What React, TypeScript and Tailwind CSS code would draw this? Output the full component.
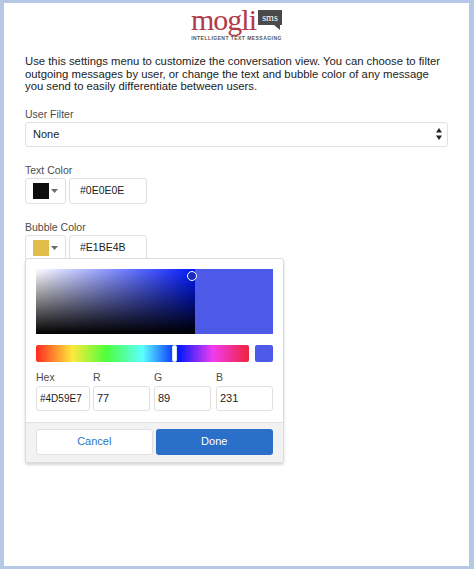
const Swatch = ({ gold }: { gold?: boolean }) => (
  <div className="flex h-[26px] w-[41px] items-center rounded-[3px] border border-[#e2e0de] bg-white pl-[7px]">
    <div className={gold ? 'h-[16px] w-[16px] bg-[#e1be4b]' : 'h-[16px] w-[16px] bg-[#0e0e0e]'} />
    <svg width="7" height="4" viewBox="0 0 7 4" className="ml-[2px]">
      <path d="M0 0h7L3.5 4z" fill="#6b6b6b" />
    </svg>
  </div>
);

const ColorField = ({ label, hex, gold }: { label: string; hex: string; gold?: boolean }) => (
  <div>
    <div className="mb-[1px] text-[10.5px] leading-[14px] text-[#4c4c4c]">{label}</div>
    <div className="flex gap-[3px]">
      <Swatch gold={gold} />
      <div className="flex h-[26px] w-[78px] items-center rounded-[3px] border border-[#e2e0de] bg-white pl-[10px] text-[10.5px] text-[#222]">
        {hex}
      </div>
    </div>
  </div>
);

const RgbField = ({ label, value, className, small }: { label: string; value: string; className: string; small?: boolean }) => (
  <div className={className}>
    <div className="mb-[2px] text-[10.5px] leading-[13px] text-[#4c4c4c]">{label}</div>
    <div className={small ? 'flex h-[25px] items-center rounded-[3px] border border-[#e2e0de] bg-white pl-[3px] text-[10px] text-[#222]' : 'flex h-[25px] items-center rounded-[3px] border border-[#e2e0de] bg-white pl-[3px] text-[11px] text-[#222]'}>
      {value}
    </div>
  </div>
);

export default function App() {
  return (
    <div className="flex h-[569px] w-[474px] flex-col overflow-hidden bg-[#b5c9e6] pb-[3px] pl-[4px] pr-[5px] pt-[3px] font-['Liberation_Sans',Arial,sans-serif]">
      <div className="flex-1 bg-white px-[21px] text-[#222]">
        {/* logo */}
        <div className="flex flex-col items-center pt-[3px]">
          <div className="flex h-[28px] items-start gap-[2px]">
            <span className="font-['Liberation_Serif',serif] text-[30px] leading-[28px] tracking-[-1px] text-[#b23a48]">mogli</span>
            <div className="relative mt-[4px] flex h-[15px] w-[24px] items-center justify-center bg-[#4a4a4a] font-['Liberation_Serif',serif] text-[10px] leading-none text-white">
              sms
              <svg width="6" height="5" viewBox="0 0 6 5" className="absolute right-[2px] top-[15px]">
                <path d="M0 0h6v5z" fill="#4a4a4a" />
              </svg>
            </div>
          </div>
          <div className="mt-[1px] whitespace-nowrap text-[5px] font-bold leading-[6px] tracking-[0.45px] text-[#555]">INTELLIGENT TEXT MESSAGING</div>
        </div>

        <p className="mt-[14px] text-[11.3px] leading-[12.5px] text-[#222]">
          Use this settings menu to customize the conversation view. You can choose to filter outgoing messages by user, or change the text and bubble color of any message you send to easily differentiate between users.
        </p>

        <div className="mt-[14px] text-[10.5px] leading-[14px] text-[#4c4c4c]">User Filter</div>
        <div className="mt-[1px] flex h-[25px] items-center justify-between rounded-[3px] border border-[#e2e0de] bg-white pl-[7px] pr-[5px] text-[11px]">
          None
          <svg width="6" height="12" viewBox="0 0 6 12">
            <path d="M0 4.5 3 0l3 4.5zM0 7.5 3 12l3-4.5z" fill="#222" />
          </svg>
        </div>

        <div className="mt-[16px] flex flex-col gap-[16px]">
          <ColorField label="Text Color" hex="#0E0E0E" />
          <ColorField label="Bubble Color" hex="#E1BE4B" gold />
        </div>

        {/* color picker popover */}
        <div className="relative z-10 -mt-[3px] w-[259px] rounded-[3px] border border-[#dddbd8] bg-white shadow-[0_2px_3px_rgba(0,0,0,0.16)]">
          <div className="px-[10px] pt-[10px]">
            <div className="flex h-[65px]">
              <div className="relative w-[159px] bg-[#0019ff]">
                <div className="absolute inset-0 bg-gradient-to-r from-white to-transparent" />
                <div className="absolute inset-0 bg-gradient-to-b from-transparent to-black" />
                <div className="absolute left-[151px] top-[2px] h-[10px] w-[10px] rounded-full border-[1.5px] border-white bg-[#1a2bc0]" />
              </div>
              <div className="flex-1 bg-[#4d59e7]" />
            </div>
            <div className="mt-[11px] flex items-center justify-between">
              <div className="relative h-[17px] w-[213px] rounded-[2px] bg-[linear-gradient(to_right,#ff2a1f_0%,#ffe93b_17%,#4dff3b_33%,#5cffff_50%,#0019ff_67%,#f03cf0_83%,#f0243c_100%)]">
                <div className="absolute left-[136px] top-0 h-[17px] w-[5px] rounded-[2px] border border-[#d7e3f2] bg-white" />
              </div>
              <div className="h-[17px] w-[18px] rounded-[2px] bg-[#4d59e7]" />
            </div>
            <div className="mt-[9px] flex">
              <RgbField label="Hex" value="#4D59E7" className="w-[54px]" small />
              <RgbField label="R" value="77" className="ml-[3px] w-[57px]" />
              <RgbField label="G" value="89" className="ml-[4px] w-[57px]" />
              <RgbField label="B" value="231" className="ml-[5px] w-[57px]" />
            </div>
          </div>
          <div className="mt-[11px] flex gap-[3px] rounded-b-[3px] border-t border-[#e2e0de] bg-[#f3f2f2] px-[10px] pb-[7px] pt-[6px]">
            <div className="flex h-[26px] w-[117px] items-center justify-center rounded-[3px] border border-[#e2e0de] bg-white text-[11px] text-[#2f74c4]">Cancel</div>
            <div className="flex h-[26px] w-[118px] items-center justify-center rounded-[3px] bg-[#2a70c8] text-[11px] text-white">Done</div>
          </div>
        </div>
      </div>
    </div>
  );
}
